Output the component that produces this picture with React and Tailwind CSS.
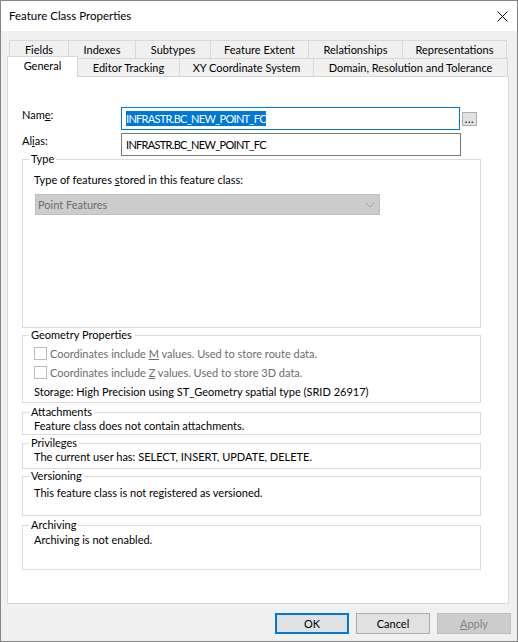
import React from "react";

const backTabs = [
  { label: "Fields", w: "w-[59px]" },
  { label: "Indexes", w: "w-[67px]" },
  { label: "Subtypes", w: "w-[75px]" },
  { label: "Feature Extent", w: "w-[98px]" },
  { label: "Relationships", w: "w-[94px]" },
  { label: "Representations", w: "w-[105px]" },
];

const frontTabs = [
  { label: "Editor Tracking", w: "w-[102px]" },
  { label: "XY Coordinate System", w: "w-[134px]" },
  { label: "Domain, Resolution and Tolerance", w: "w-[194px]" },
];

// group box drawn with fieldset + legend, the way a win32 groupbox looks
const Group = ({ title, className, children }) => (
  <fieldset className={`w-[459px] border border-[#dcdcdc] pl-[6px] ${className}`}>
    <legend className="px-[2px] leading-[14px]">{title}</legend>
    <div className="pl-[5px]">{children}</div>
  </fieldset>
);

const CheckRow = ({ children }) => (
  <div className="h-[19px] flex items-center gap-[3px] text-[#6d6d6d]">
    <div className="w-[13px] h-[13px] border border-[#bcbcbc] bg-white shrink-0" />
    <span>{children}</span>
  </div>
);

export default function App() {
  return (
    <div className="w-[518px] h-[642px] border border-[#858585] bg-[#f0f0f0] flex flex-col font-['Lato',sans-serif] text-[11px] leading-[16px] text-black select-none">
      {/* Title bar */}
      <div className="h-[30px] shrink-0 bg-white flex items-center justify-between pl-[8px] pr-[9px]">
        <span className="text-[11.5px]">Feature Class Properties</span>
        <svg width="11" height="11" viewBox="0 0 11 11">
          <path d="M0.5 0.5 L10.5 10.5 M10.5 0.5 L0.5 10.5" stroke="#000" strokeWidth="1" />
        </svg>
      </div>

      <div className="pt-[9px]">
        {/* back row of tabs */}
        <div className="flex h-[18px] ml-[8px]">
          {backTabs.map((t, i) => (
            <div
              key={t.label}
              className={`${t.w} border-t border-l border-[#d9d9d9] flex items-center justify-center ${
                i === backTabs.length - 1 ? "border-r" : ""
              }`}
            >
              {t.label}
            </div>
          ))}
        </div>

        {/* front row of tabs */}
        <div className="flex items-start h-[18px] ml-[6px]">
          <div className="relative z-10 -mt-[2px] w-[71px] h-[21px] bg-white border-t border-l border-r border-[#d9d9d9] flex justify-center pt-[1px]">
            General
          </div>
          {frontTabs.map((t) => (
            <div
              key={t.label}
              className={`${t.w} h-[18px] border-t border-r border-[#d9d9d9] flex items-center justify-center`}
            >
              {t.label}
            </div>
          ))}
        </div>

        {/* tab page */}
        <div className="ml-[6px] w-[502px] h-[528px] bg-white border border-[#d9d9d9] pt-[30px] pl-[14px]">
          <div className="flex items-start h-[23px]">
            <div className="w-[99px]">
              Nam<span className="underline">e</span>:
            </div>
            <div className="w-[339px] h-[23px] border border-[#0078d7] flex items-center pl-[4px]">
              <span className="bg-[#0078d7] text-white leading-[15px] tracking-[-0.7px]">INFRASTR.BC_NEW_POINT_FC</span>
            </div>
            <div className="ml-[2px] mt-[5px] w-[15px] h-[14px] bg-[#e1e1e1] border border-[#adadad] flex justify-center pt-[1px] leading-[10px] tracking-[0.5px]">
              ...
            </div>
          </div>

          <div className="flex items-start h-[23px] mt-[3px]">
            <div className="w-[99px]">
              Al<span className="underline">i</span>as:
            </div>
            <div className="w-[340px] h-[23px] border border-[#7a7a7a] flex items-center pl-[4px] tracking-[-0.7px]">
              INFRASTR.BC_NEW_POINT_FC
            </div>
          </div>

          <Group title="Type" className="-mt-[4px] h-[176px]">
            <div className="pt-[6px]">
              Type of features <span className="underline">s</span>tored in this feature class:
            </div>
            <div className="mt-[6px] ml-[1px] w-[345px] h-[21px] bg-[#cccccc] border border-[#bfbfbf] flex items-center justify-between pl-[2px] pr-[4px] text-[#6d6d6d]">
              <span>Point Features</span>
              <svg width="10" height="6" viewBox="0 0 10 6">
                <path d="M0.5 0.5 L5 5 L9.5 0.5" fill="none" stroke="#a6a6a6" strokeWidth="1" />
              </svg>
            </div>
          </Group>

          <Group title="Geometry Properties" className="h-[75px]">
            <div className="pt-[2px]">
              <CheckRow>
                Coordinates include <span className="underline">M</span> values. Used to store route data.
              </CheckRow>
              <CheckRow>
                Coordinates include <span className="underline">Z</span> values. Used to store 3D data.
              </CheckRow>
              <div className="mt-[2px]">Storage: High Precision using ST_Geometry spatial type (SRID 26917)</div>
            </div>
          </Group>

          <Group title="Attachments" className="mt-[2px] h-[30px]">
            <div className="leading-[14px]">Feature class does not contain attachments.</div>
          </Group>

          <Group title="Privileges" className="mt-[1px] h-[33px]">
            <div className="leading-[14px]">The current user has: SELECT, INSERT, UPDATE, DELETE.</div>
          </Group>

          <Group title="Versioning" className="h-[47px]">
            <div className="pt-[3px] leading-[14px]">This feature class is not registered as versioned.</div>
          </Group>

          <Group title="Archiving" className="mt-[2px] h-[52px]">
            <div className="pt-[1px] leading-[14px]">Archiving is not enabled.</div>
          </Group>
        </div>

        {/* buttons */}
        <div className="flex justify-end gap-[7px] pr-[6px] mt-[9px]">
          <button className="w-[74px] h-[21px] bg-[#e1e1e1] border-2 border-[#0078d7] flex items-center justify-center">
            OK
          </button>
          <button className="w-[74px] h-[21px] bg-[#e1e1e1] border border-[#adadad] flex items-center justify-center">
            Cancel
          </button>
          <button className="w-[74px] h-[21px] bg-[#cccccc] border border-[#bfbfbf] text-[#838383] flex items-center justify-center">
            <span>
              <span className="underline">A</span>pply
            </span>
          </button>
        </div>
      </div>
    </div>
  );
}
